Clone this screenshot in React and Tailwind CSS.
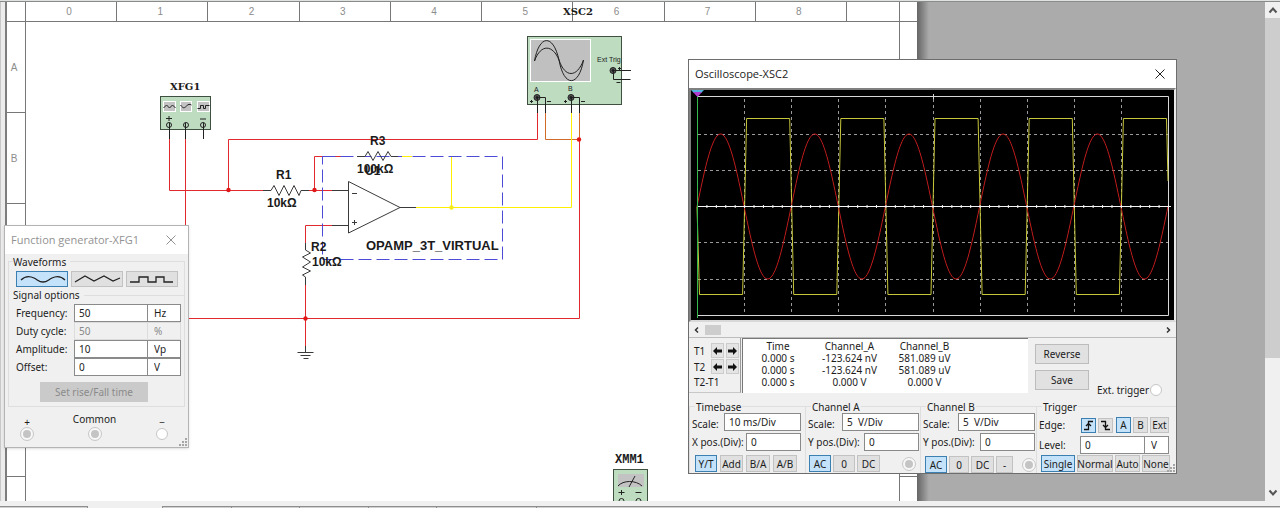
import { useState } from 'react';

const COLS = ['0', '1', '2', '3', '4', '5', '6', '7', '8'];
const ROWS = ['A', 'B', '', '', ''];
const ui = "font-['Noto_Sans','Open_Sans',sans-serif] text-[10px] leading-[12px] text-[#1c1c1c]";
const field = 'bg-white border border-[#8a8a8a] px-1 min-w-0 text-[10px] leading-[12px] text-[#1c1c1c] rounded-none outline-none';

function Toggle({ active, className = '', children, ...rest }) {
  return (
    <button
      type="button"
      aria-pressed={active}
      className={`flex shrink-0 items-center justify-center border ${active ? 'bg-[#c4e2fa] border-[#3c7fb1]' : 'bg-[#e0e0e0] border-[#c2c2c2]'} ${className}`}
      {...rest}
    >
      {children}
    </button>
  );
}

function Terminal({ label, name, checked = false }) {
  return (
    <input
      type="radio"
      aria-label={label}
      name={name}
      defaultChecked={checked}
      className="block size-3 shrink-0 appearance-none rounded-full border border-[#c6c6c6] bg-white checked:border-2 checked:border-[#f8f8f8] checked:bg-[#c4c4c4] checked:outline checked:outline-[#c8c8c8]"
    />
  );
}

function CloseIcon() {
  return (
    <svg width="10" height="10" viewBox="0 0 10 10" stroke="currentColor" fill="none">
      <path d="M.5.5l9 9M9.5.5l-9 9" />
    </svg>
  );
}

function Grip() {
  return (
    <svg className="absolute bottom-0 right-0" width="9" height="9" viewBox="0 0 9 9" fill="#a5a5a5">
      <path d="M6 0h2v2H6zM3 3h2v2H3zM6 3h2v2H6zM0 6h2v2H0zM3 6h2v2H3zM6 6h2v2H6z" />
    </svg>
  );
}

/* page sheet with its zone rulers */
function Sheet() {
  return (
    <div className="flex w-[912px] shrink-0 flex-col border-l-2 border-[#7d7d7d] bg-white font-['Liberation_Sans',Arial,sans-serif] text-[10px] text-[#8c8c8c]">
      <div className="flex h-5 shrink-0 border-b border-[#777]">
        <div className="w-[19px] shrink-0 border-r border-[#777]" />
        <div className="flex w-[821px] shrink-0">
          {COLS.map((c) => (
            <div key={c} className="flex flex-1 items-center justify-center border-r border-[#777] pr-1">{c}</div>
          ))}
        </div>
        <div className="flex-1 border-r border-[#777]" />
        <div className="w-[17px]" />
      </div>
      <div className="flex min-h-0 flex-1 overflow-hidden">
        <div className="w-[19px] shrink-0 border-r border-[#777]">
          {ROWS.map((r, i) => (
            <div key={i} className="flex h-[91px] items-center justify-center border-b border-[#777] pr-1">{r}</div>
          ))}
        </div>
        <div className="flex-1 border-r border-[#777]" />
        <div className="w-[17px]">
          {ROWS.map((r, i) => <div key={i} className="h-[91px] border-b border-[#777]" />)}
        </div>
      </div>
    </div>
  );
}

function Circuit() {
  return (
    <svg className="absolute left-0 top-0" width="688" height="501" viewBox="0 0 688 501" fill="none">
      {/* wires */}
      <g stroke="#e02a30">
        <path d="M169.500 139V190.500H263M185.500 139V318.500H579.500V139.500" />
        <path d="M228.500 190.500V139.500H537.500V112" />
        <path d="M305 190.500H332M314.500 190.500V156.500H348M332 225.500H305.500V243M305.500 283V346" />
      </g>
      <path d="M545.500 112V139.500H579.500V112" stroke="#d06a2a" />
      <rect x="322.500" y="156.500" width="180" height="103" stroke="#4b4bd6" strokeDasharray="13 5" />
      <path d="M416 207.500H571.500V112M451.500 207V157M402 156.500H412" stroke="#fff000" />

      <g stroke="#3a3a3a">
        <path d="M263 190.500h8l3-5 5 10 5-10 5 10 5-10 5 10 2-5h8" />
        <path d="M357 156.500h8l3-5 5 9 5-9 5 9 5-9 3 5h7" />
        <path d="M305.500 243v7l5 3-8 4 8 5-8 5 8 4-8 4 3 2v8" />
        <path d="M348.500 181.500V233L400 207.500ZM332 190.500h16M332 225.500h16M400 207.500h16M352 193.500h5M352 222.500h5M354.500 220v5" />
        <path d="M305.500 346v6M297.500 352.500h16M300.500 355.500h10M303.500 358.500h5" />
      </g>
      <g fill="#e01818">
        <circle cx="228.500" cy="190" r="2.200" />
        <circle cx="314.500" cy="190" r="2.200" />
        <circle cx="305.500" cy="318.500" r="2.200" />
        <circle cx="579" cy="139.500" r="2.200" />
        <circle cx="451.500" cy="207.500" r="2.200" fill="#f4ec20" />
      </g>

      {/* function generator */}
      <rect x="160.500" y="96.500" width="50" height="33" fill="#bddcc0" stroke="#3f4f40" />
      <g fill="#c3c3c3" stroke="#fff">
        <rect x="163.500" y="101.500" width="12" height="10" />
        <rect x="180.500" y="101.500" width="11" height="10" />
        <rect x="197.500" y="101.500" width="12" height="10" />
      </g>
      <g stroke="#222">
        <path d="M163.500 108l3-3 3 3 3-3 3 3M180.500 105c3 4 4 3 6 1s3-2 5-1M197.500 108.500h3v-3h3v3h2v-3h4" />
        <path d="M166 118.500h6M169 116v5M200 119h6" />
        <circle cx="169" cy="125" r="2.500" />
        <circle cx="186" cy="125" r="2.500" />
        <circle cx="203" cy="125" r="2.500" />
        <path d="M169.500 123v16M185.500 123v16M203.500 123v16" />
      </g>

      {/* oscilloscope */}
      <rect x="527.500" y="36.500" width="94" height="68" fill="#bddcc0" stroke="#3f4f40" />
      <rect x="530.500" y="39.500" width="60" height="42" fill="#c0c0c0" stroke="#fff" />
      <g stroke="#222">
        <path d="M534.500 61C539 35 553 33 559 60C564 88 579 87 583.500 60M534.500 61C541 43 553 45 559 60C565 78 577 78 583.500 60" />
        <circle cx="537" cy="97.500" r="3" fill="#555" />
        <circle cx="571" cy="97.500" r="3" fill="#555" />
        <circle cx="613" cy="70.500" r="3" fill="#555" />
        <path d="M537.500 98v15M537 97.500h8.500V113M571.500 98v15M571 97.500h8.500V113M613 70.500h18M613.500 71v8.500h17" />
        <path d="M530 101.500h3M531.500 100v3M547 101.500h4M564 101.500h3M565.500 100v3M581 101.500h4M616.500 82.500h4M618 68.500h3M619.500 67v3" />
        <circle cx="537" cy="97.500" r="1" fill="#111" />
        <circle cx="571" cy="97.500" r="1" fill="#111" />
        <circle cx="613" cy="70.500" r="1" fill="#111" />
      </g>

      {/* multimeter */}
      <rect x="613.500" y="469.500" width="34" height="36" fill="#bddcc0" stroke="#3f4f40" />
      <rect x="618" y="474" width="26" height="13" fill="#c3c3c3" />
      <g stroke="#222">
        <path d="M618 486c5-6 18-6 24 0M629 487l6-11M618.500 492.500h6M621.500 490v5M635.500 492.500h6" />
        <circle cx="621.500" cy="501" r="2.500" />
        <circle cx="638.500" cy="501" r="2.500" />
      </g>

      <g fill="#1a1a1a" stroke="none" className="font-['DejaVu_Serif',serif] text-[10px] font-bold">
        <text x="170" y="90">XFG1</text>
        <text x="563" y="15">XSC2</text>
        <text x="615" y="463" className="font-['Liberation_Mono',monospace] text-[12px]">XMM1</text>
      </g>
      <g fill="#1a1a1a" stroke="none" className="font-['Liberation_Sans',Arial,sans-serif] text-[12px] font-bold">
        <text x="276" y="179">R1</text>
        <text x="267" y="207">10kΩ</text>
        <text x="370" y="145">R3</text>
        <text x="357" y="173">100kΩ</text>
        <text x="365" y="175">U1</text>
        <text x="311" y="251">R2</text>
        <text x="312" y="266">10kΩ</text>
        <text x="366" y="250" className="text-[13px]">OPAMP_3T_VIRTUAL</text>
      </g>
      <g fill="#222" stroke="none" className="font-['Liberation_Sans',Arial,sans-serif] text-[7px]">
        <text x="597" y="62">Ext Trig</text>
        <text x="534" y="92">A</text>
        <text x="568" y="91">B</text>
      </g>
    </svg>
  );
}

const WAVES = [
  ['Sine', 'M4 8c4-4 9-4 13-2s5 4 9 4 5-2 9-4 9-2 13 2'],
  ['Triangle', 'M3 10l10-6 9 5 10-5 9 5 7-3'],
  ['Square', 'M3 10h9V5h9v5h8V5h8v5h9'],
];

const SIGNAL = [
  ['Frequency:', '50', 'Hz'],
  ['Duty cycle:', '50', '%'],
  ['Amplitude:', '10', 'Vp'],
  ['Offset:', '0', 'V'],
];

function FunctionGenerator() {
  const [wave, setWave] = useState('Sine');
  return (
    <section className={`absolute left-1 top-[225px] w-[185px] border border-[#b4b4b4] bg-[#f0f0f0] shadow-sm ${ui}`}>
      <header className="flex h-7 items-center justify-between bg-white pl-1.5 pr-3 font-['Open_Sans',sans-serif] text-[11px] text-[#929292]">
        <h2>Function generator-XFG1</h2>
        <button type="button" aria-label="Close"><CloseIcon /></button>
      </header>
      <div className="mx-[3px] mt-[7px] border border-[#dedede] pb-1">
        <h3 className="-mt-1.5 ml-1 w-fit bg-[#f0f0f0] pr-1">Waveforms</h3>
        <div className="mt-[3px] flex gap-[3px] pl-[7px]">
          {WAVES.map(([name, d]) => (
            <Toggle key={name} active={wave === name} onClick={() => setWave(name)} aria-label={name} className="h-4 w-[52px]">
              <svg width="50" height="14" viewBox="0 0 50 14" fill="none" stroke="#222" strokeWidth="1.3"><path d={d} /></svg>
            </Toggle>
          ))}
        </div>
        <div className="mt-0.5 flex items-center gap-1 pl-1">
          <h3>Signal options</h3>
          <span className="h-px flex-1 bg-[#dedede]" />
        </div>
        <div className="mt-[3px] pl-[7px] pr-[3px]">
          {SIGNAL.map(([label, value, unit]) => {
            const off = label === 'Duty cycle:';
            return (
              <label key={label} className="flex h-[18px] items-center">
                <span className="w-[58px]">{label}</span>
                <input defaultValue={value} disabled={off} className={`h-[18px] w-[74px] ${field} disabled:border-[#dcdcdc] disabled:bg-[#f0f0f0] disabled:text-[#888]`} />
                <input aria-label={`${label} unit`} defaultValue={unit} disabled={off} className={`-ml-px h-[18px] flex-1 ${field} pl-1.5 disabled:border-[#dcdcdc] disabled:bg-[#f0f0f0] disabled:text-[#888]`} />
              </label>
            );
          })}
        </div>
        <button type="button" disabled className="ml-[31px] mt-1.5 h-5 w-[108px] bg-[#cacaca] text-[#8a8a8a]">Set rise/Fall time</button>
      </div>
      <div className="flex h-10 items-end justify-between pb-[7px] pl-4 pr-5">
        <div className="flex flex-col items-center"><span>+</span><Terminal label="Positive" name="fg-pos" checked /></div>
        <div className="flex flex-col items-center gap-[3px]"><span>Common</span><Terminal label="Common" name="fg-com" checked /></div>
        <div className="flex flex-col items-center"><span>−</span><Terminal label="Negative" name="fg-neg" /></div>
      </div>
      <Grip />
    </section>
  );
}

const DIV = 47.1;
const sine = Array.from({ length: 472 }, (_, x) => `${x ? 'L' : 'M'}${x + 6} ${(115.5 - 72.5 * Math.sin((x * Math.PI) / DIV)).toFixed(1)}`).join('');
let square = 'M6 115.500L8.500 203.500';
for (let i = 1; i <= 9; i++) {
  const x = 6.5 + i * DIV;
  const [from, to] = i % 2 ? [203.5, 27.5] : [27.5, 203.5];
  square += `L${(x - 2).toFixed(1)} ${from}L${(x + 2).toFixed(1)} ${to}`;
}
square += 'L475.500 27.500L477 90';

function Trace() {
  const divs = [1, 2, 3, 4, 5, 6, 7, 8, 9];
  return (
    <svg className="block h-auto w-full bg-black" viewBox="0 -1 483 230" fill="none">
      <g stroke="#9a9a9a" strokeDasharray="3 3" shapeRendering="crispEdges">
        {divs.map((i) => <path key={i} d={`M${Math.round(6 + i * DIV)}.500 8V225`} />)}
        {[43, 79, 151, 188].map((y) => <path key={y} d={`M7 ${y}.500H477`} />)}
      </g>
      <path d="M6 5.500H477.500V224.500H6" stroke="#d8d8d8" />
      <path d="M242.500 3v5" stroke="#d8d8d8" />
      <path d={square} stroke="#c6c63a" />
      <path d={sine} stroke="#c01c1c" />
      <path d="M6 115.500H480" stroke="#f4f4f4" />
      <path d="M6 115.500H478" stroke="#f4f4f4" strokeWidth="3" strokeDasharray="1 8.420" />
      <path d="M6.500 4V227" stroke="#35b84a" />
      <path d="M0-1h13l-3 3H3z" fill="#4fb4e0" />
      <path d="M2 1h9l-4.500 5z" fill="#b03cd0" />
    </svg>
  );
}

const READOUT = [
  ['0.000 s', '-123.624 nV', '581.089 uV'],
  ['0.000 s', '-123.624 nV', '581.089 uV'],
  ['0.000 s', '0.000 V', '0.000 V'],
];

function Arrow({ flip }) {
  return (
    <svg width="9" height="8" viewBox="0 0 9 8" className={flip ? 'rotate-180' : ''}>
      <path d="M0 4l4-4v2.600h5v2.800H4V8z" fill="#111" />
    </svg>
  );
}

function CursorRow({ name }) {
  return (
    <div className="flex items-center">
      <span className="w-[17px]">{name}</span>
      <button type="button" aria-label={`${name} left`} className="flex h-[15px] w-[13px] items-center justify-center border border-[#ccc] bg-[#e4e4e4]"><Arrow /></button>
      <button type="button" aria-label={`${name} right`} className="ml-0.5 flex h-[15px] w-[13px] items-center justify-center border border-[#ccc] bg-[#e4e4e4]"><Arrow flip /></button>
    </div>
  );
}

function Group({ title, className = '', children }) {
  return (
    <section className={`border-l border-t border-[#dedede] pl-0.5 ${className}`}>
      <h3 className="-mt-1.5 ml-[3px] w-fit bg-[#f0f0f0] px-px">{title}</h3>
      {children}
    </section>
  );
}

function ScaleFields({ scale, pos, posLabel }) {
  return (
    <>
      <label className="flex items-center justify-between">
        <span className="pt-1">Scale:</span>
        <input defaultValue={scale} className={`h-[18px] w-[77px] ${field}`} />
      </label>
      <label className="mt-0.5 flex items-center justify-between">
        <span className="whitespace-nowrap">{posLabel}</span>
        <input defaultValue={pos} className={`h-[18px] w-[55px] ${field}`} />
      </label>
    </>
  );
}

function ModeRow({ items, className = '', children }) {
  const [mode, setMode] = useState(items[0][0]);
  return (
    <div className={`flex items-center ${className}`}>
      {items.map(([name, width]) => (
        <Toggle key={name} active={mode === name} onClick={() => setMode(name)} className={`h-[17px] ${width}`}>{name}</Toggle>
      ))}
      {children}
    </div>
  );
}

function Oscilloscope() {
  const [edge, setEdge] = useState('rising');
  const [source, setSource] = useState('A');
  return (
    <section className={`absolute left-[688px] top-[59px] w-[489px] border border-[#6d6d6d] bg-[#f0f0f0] ${ui}`}>
      <header className="flex h-7 items-center justify-between bg-white pl-1.5 pr-[11px] font-['Open_Sans',sans-serif] text-[11px] text-[#222]">
        <h2>Oscilloscope-XSC2</h2>
        <button type="button" aria-label="Close"><CloseIcon /></button>
      </header>
      <div className="border-2 border-b-[#d8d8d8] border-l-[#808080] border-r-[#e8e8e8] border-t-[#808080]">
        <Trace />
      </div>
      <div className="flex h-4 items-center border-b border-[#bdbdbd] px-1">
        <svg width="8" height="8" viewBox="0 0 8 8" fill="none" stroke="#333" strokeWidth="1.500"><path d="M5 1.500L2.500 4 5 6.500" /></svg>
        <span className="ml-1 h-2.5 w-4 bg-[#cdcdcd]" />
        <svg className="ml-auto" width="8" height="8" viewBox="0 0 8 8" fill="none" stroke="#333" strokeWidth="1.500"><path d="M3 1.500L5.500 4 3 6.500" /></svg>
      </div>
      <div className="flex items-start">
        <div className="flex h-[55px] w-[52px] flex-col gap-px border-b border-r border-b-[#c8c8c8] border-r-[#9a9a9a] pl-[5px] pt-[5px]">
          <CursorRow name="T1" />
          <CursorRow name="T2" />
          <div className="mt-px">T2-T1</div>
        </div>
        <div className="ml-px h-[55px] w-[286px] border-l border-t border-[#777] bg-white pt-px">
          <table className="w-[220px] table-fixed text-center leading-[12px]">
            <thead>
              <tr>
                <th className="w-[70px] p-0 font-normal">Time</th>
                <th className="w-[73px] p-0 font-normal">Channel_A</th>
                <th className="p-0 font-normal">Channel_B</th>
              </tr>
            </thead>
            <tbody>
              {READOUT.map((row, i) => (
                <tr key={i}>{row.map((v, j) => <td key={j} className="p-0">{v}</td>)}</tr>
              ))}
            </tbody>
          </table>
        </div>
        <div className="ml-[7px] flex flex-col gap-1.5 pt-1.5">
          <button type="button" className="h-5 w-[54px] border border-[#bcbcbc] bg-[#e1e1e1]">Reverse</button>
          <button type="button" className="h-5 w-[54px] border border-[#bcbcbc] bg-[#e1e1e1]">Save</button>
        </div>
        <label className="ml-2 mt-[46px] flex items-center gap-px whitespace-nowrap">
          Ext. trigger
          <Terminal label="Ext. trigger" name="ext" />
        </label>
      </div>
      <div className="mt-2.5 flex h-[67px]">
        <Group title="Timebase" className="w-[116px] pr-1">
          <ScaleFields scale="10 ms/Div" pos="0" posLabel="X pos.(Div):" />
          <ModeRow className="mt-1 gap-[3px] pl-[3px]" items={[['Y/T', 'w-[22px]'], ['Add', 'w-[23px]'], ['B/A', 'w-[24px]'], ['A/B', 'w-[24px]']]} />
        </Group>
        <Group title="Channel A" className="w-[115px] pr-px">
          <ScaleFields scale="5  V/Div" pos="0" posLabel="Y pos.(Div):" />
          <ModeRow className="mt-1 gap-0.5 pl-px" items={[['AC', 'w-[22px]'], ['0', 'w-[22px]'], ['DC', 'w-[23px]']]}>
            <span className="ml-auto mr-1"><Terminal label="Channel A input" name="cha" checked /></span>
          </ModeRow>
        </Group>
        <Group title="Channel B" className="w-[116px] pr-px">
          <ScaleFields scale="5  V/Div" pos="0" posLabel="Y pos.(Div):" />
          <ModeRow className="mt-[5px] gap-0.5 pl-0.5" items={[['AC', 'w-[22px]'], ['0', 'w-5'], ['DC', 'w-[23px]'], ['-', 'w-[17px]']]}>
            <span className="ml-auto"><Terminal label="Channel B input" name="chb" checked /></span>
          </ModeRow>
        </Group>
        <Group title="Trigger" className="flex-1 pr-1">
          <div className="mt-1 flex items-center">
            <span className="w-[42px]">Edge:</span>
            <Toggle active={edge === 'rising'} onClick={() => setEdge('rising')} aria-label="Rising edge" className="size-[15px]">
              <svg className="shrink-0" width="11" height="11" viewBox="0 0 11 11" fill="none" stroke="#111" strokeWidth="1.300"><path d="M1 9.500h4.500v-8H10M3 6l2.500-2.500L8 6" /></svg>
            </Toggle>
            <Toggle active={edge === 'falling'} onClick={() => setEdge('falling')} aria-label="Falling edge" className="ml-0.5 size-[15px]">
              <svg className="shrink-0" width="11" height="11" viewBox="0 0 11 11" fill="none" stroke="#111" strokeWidth="1.300"><path d="M1 1.500h4.500v8H10M3 5l2.500 2.500L8 5" /></svg>
            </Toggle>
            <Toggle active={source === 'A'} onClick={() => setSource('A')} className="ml-[3px] h-4 w-[15px]">A</Toggle>
            <Toggle active={source === 'B'} onClick={() => setSource('B')} className="ml-0.5 h-4 w-[15px]">B</Toggle>
            <Toggle active={source === 'Ext'} onClick={() => setSource('Ext')} className="ml-0.5 h-4 w-[19px]">Ext</Toggle>
          </div>
          <label className="mt-[3px] flex items-center">
            <span className="w-[41px]">Level:</span>
            <input defaultValue="0" className={`h-[18px] w-[65px] ${field}`} />
            <input aria-label="Level unit" defaultValue="V" className={`-ml-px h-[18px] w-[25px] ${field} pl-1.5`} />
          </label>
          <ModeRow className="mt-px gap-0.5 whitespace-nowrap pl-0.5" items={[['Single', 'w-[34px]'], ['Normal', 'w-[36px]'], ['Auto', 'w-[25px]'], ['None', 'w-[28px]']]} />
        </Group>
      </div>
      <Grip />
    </section>
  );
}

export default function App() {
  return (
    <div className="relative flex h-screen flex-col overflow-hidden bg-[#f0f0f0]">
      <div className="h-0.5 shrink-0 border-b border-[#8a8a8a] bg-[#dfe3df]" />
      <main className="flex min-h-0 flex-1 overflow-hidden bg-[#ababab]">
        <div className="w-[5px] shrink-0 border-l border-[#c8c8c8] bg-[#ececec]" />
        <Sheet />
        <div className="w-3 shrink-0 bg-linear-to-r from-[#656565] to-[#ababab]" />
        <div className="flex-1" />
        <div className="flex w-[15px] shrink-0 flex-col bg-[#f0f0f0]">
          <svg width="15" height="16" viewBox="0 0 15 16" fill="none" stroke="#555" strokeWidth="2"><path d="M4.500 10.500l3.500-4 3.500 4" /></svg>
          <div className="h-[340px] bg-[#cdcdcd]" />
          <svg className="mt-auto" width="15" height="16" viewBox="0 0 15 16" fill="none" stroke="#555" strokeWidth="2"><path d="M4.500 5.500l3.500 4 3.500-4" /></svg>
        </div>
      </main>
      <Circuit />
      <FunctionGenerator />
      <Oscilloscope />
      <footer className="flex h-[7px] shrink-0 bg-[#f0f0f0] pt-[5px]">
        <span className="w-[88px] border-r border-t border-[#8f8f8f] bg-[#d0d0d0]" />
        <span className="w-[75px] border-r border-[#8f8f8f]" />
        <span className="w-[69px] border-r border-t border-[#8f8f8f] bg-[#d0d0d0]" />
        <span className="w-[68px] border-r border-t border-[#8f8f8f] bg-[#d0d0d0]" />
        <span className="w-[69px] border-r border-t border-[#8f8f8f] bg-[#d0d0d0]" />
        <span className="w-[68px] border-r border-t border-[#8f8f8f] bg-[#d0d0d0]" />
        <span className="w-[100px] border-r border-t border-[#8f8f8f] bg-[#d0d0d0]" />
        <span className="flex-1 border-t border-[#8f8f8f] bg-[#d0d0d0]" />
      </footer>
    </div>
  );
}
